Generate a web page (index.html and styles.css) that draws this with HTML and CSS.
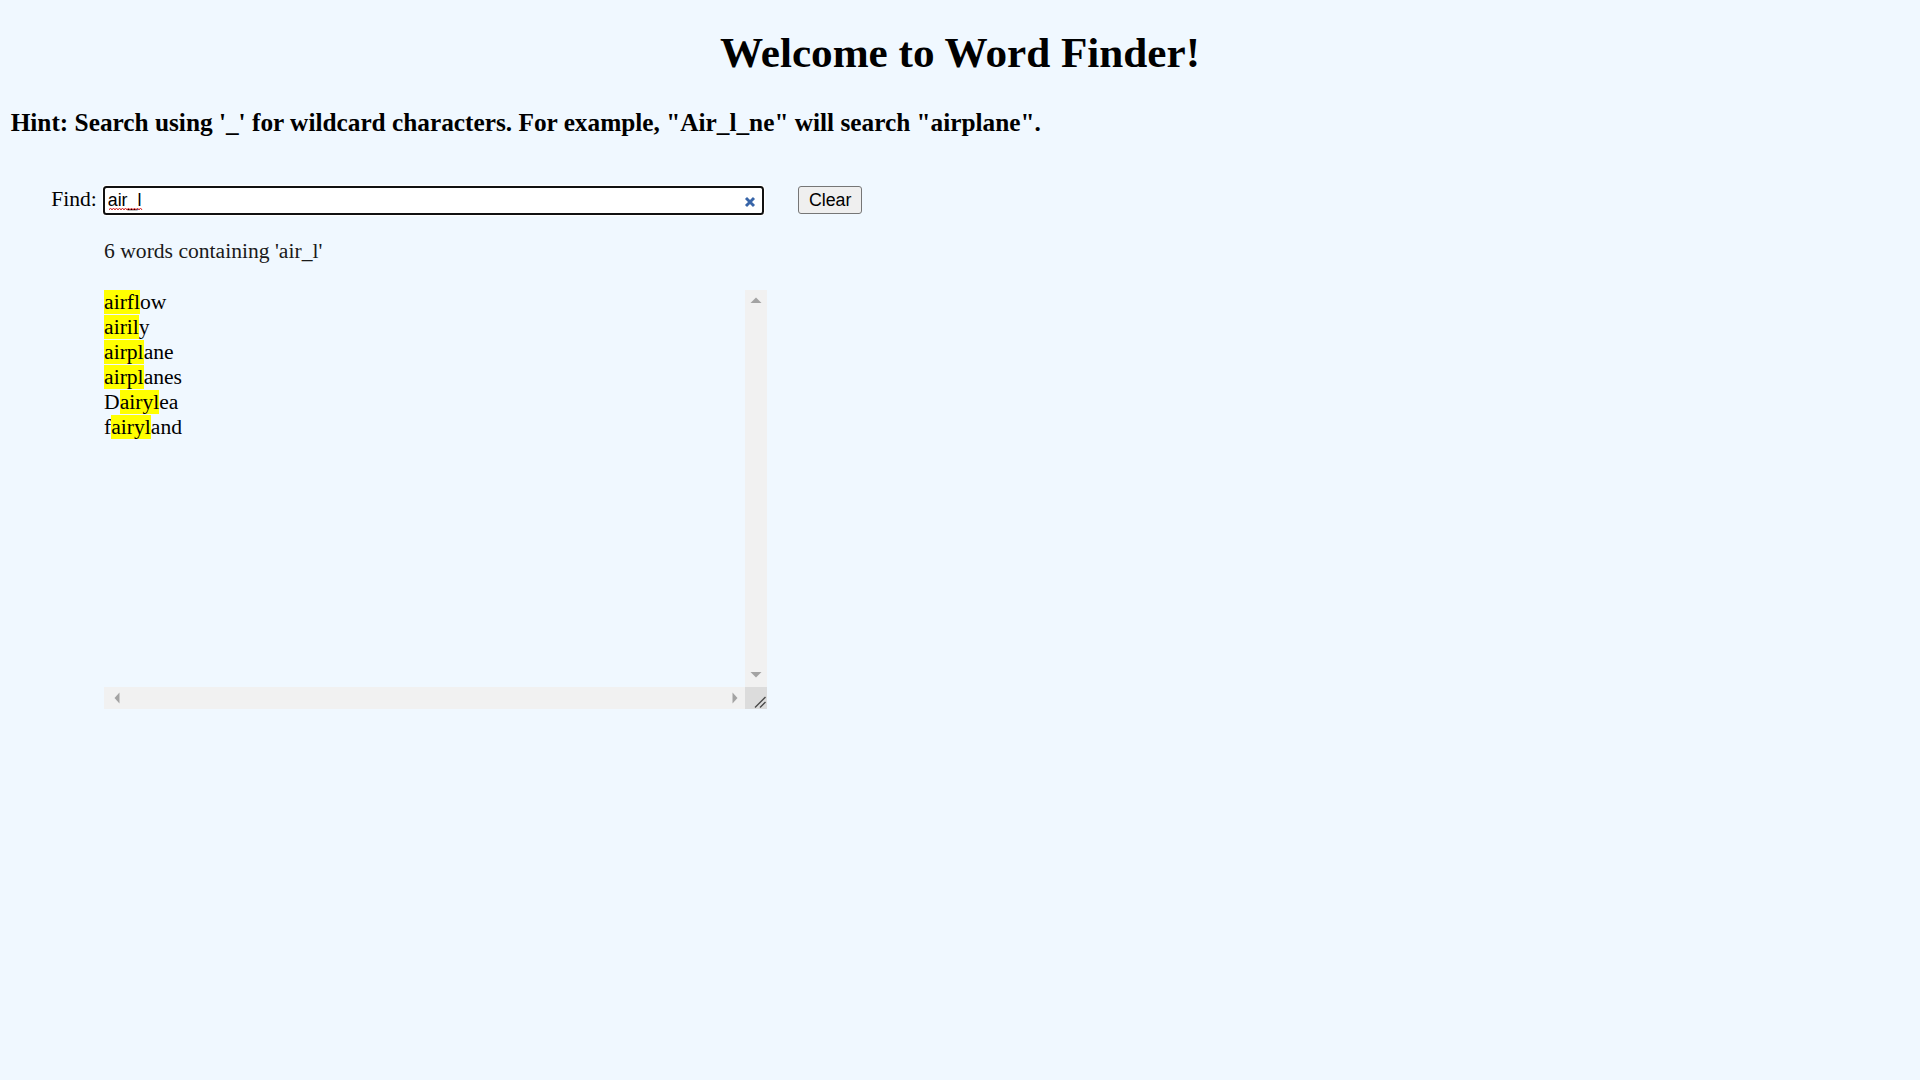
FILE: index.html
```html
<!DOCTYPE html>
<html lang="en">
<head>
<meta charset="utf-8">
<title>Word Finder</title>
<link rel="stylesheet" href="styles.css">
</head>
<body>
<h1 class="title">Welcome to Word Finder!</h1>
<h3 class="hint">Hint: Search using '_' for wildcard characters. For example, "Air_l_ne" will search "airplane".</h3>
<div class="finder">
  <div class="find-row">
    <label class="find-label" for="q">Find:</label>
    <div class="search-wrap">
      <input id="q" class="search" type="text" value="air_l" spellcheck="false">
      <svg class="squiggle" viewBox="0 0 34 4" width="34" height="4" aria-hidden="true"><path d="M0 3 L1.5 1 L3 3 L4.5 1 L6 3 L7.5 1 L9 3 L10.5 1 L12 3 L13.5 1 L15 3 L16.5 1 L18 3 L19.5 1 L21 3 L22.5 1 L24 3 L25.5 1 L27 3 L28.5 1 L30 3 L31.5 1 L33 3" fill="none" stroke="#d42a2a" stroke-width="1"/></svg>
      <svg class="cancel" viewBox="0 0 12 12" width="12" height="12" aria-hidden="true"><path d="M2 2 L10 10 M10 2 L2 10" stroke="#3865a8" stroke-width="2.9" stroke-linecap="butt"/></svg>
    </div>
    <button class="clear-btn" type="button">Clear</button>
  </div>
  <p class="count">6 words containing 'air_l'</p>
  <div class="results">
    <div class="results-list">
      <div class="word"><mark>airfl</mark>ow</div>
      <div class="word"><mark>airil</mark>y</div>
      <div class="word"><mark>airpl</mark>ane</div>
      <div class="word"><mark>airpl</mark>anes</div>
      <div class="word">D<mark>airyl</mark>ea</div>
      <div class="word">f<mark>airyl</mark>and</div>
    </div>
    <div class="vbar">
      <svg viewBox="0 0 22 12" width="22" height="12"><path d="M5.5 9 L11 3.5 L16.5 9 Z" fill="#a3a3a3"/></svg>
      <svg viewBox="0 0 22 12" width="22" height="12"><path d="M5.5 3 L11 8.5 L16.5 3 Z" fill="#a3a3a3"/></svg>
    </div>
    <div class="hbar">
      <svg viewBox="0 0 12 22" width="12" height="22"><path d="M8.5 5.5 L3.5 11 L8.5 16.5 Z" fill="#a3a3a3"/></svg>
      <svg viewBox="0 0 12 22" width="12" height="22"><path d="M3.5 5.5 L8.5 11 L3.5 16.5 Z" fill="#a3a3a3"/></svg>
    </div>
    <div class="corner">
      <svg viewBox="0 0 22 22" width="22" height="22"><path d="M10 20.5 L20.5 10 M15 20.5 L20.5 15" stroke="#4a4a4a" stroke-width="1.4"/></svg>
    </div>
  </div>
</div>
</body>
</html>
```

FILE: styles.css
```css
html, body {
  margin: 0;
  padding: 0;
}

body {
  background: #f0f8ff;
  color: #000;
  font-family: "Liberation Serif", "Times New Roman", serif;
  font-size: 21.6px;
  padding: 0 10.67px;
  min-height: 1080px;
  box-sizing: border-box;
}

.title {
  margin: 0;
  padding-top: 29.4px;
  font-size: 43.2px;
  line-height: 48px;
  font-weight: bold;
  text-align: center;
}

.hint {
  margin: 30.2px 0 0;
  font-size: 25.3px;
  line-height: 29px;
  font-weight: bold;
}

.finder {
  margin-top: 49px;
}

.find-row {
  display: flex;
  align-items: baseline;
}

.find-label {
  margin-left: 40.5px;
  margin-right: 6px;
  line-height: 25px;
}

.search-wrap {
  position: relative;
  display: flex;
}

.search {
  width: 661.6px;
  height: 29px;
  box-sizing: border-box;
  margin: 0;
  padding: 0 20px 0 3px;
  border: 2.6px solid #111;
  border-radius: 3.5px;
  background: #fff;
  box-shadow: 0 0 0 1.2px #fff;
  outline: none;
  font-family: "Liberation Sans", Arial, sans-serif;
  font-size: 17.78px;
  color: #000;
}

.squiggle {
  position: absolute;
  left: 5.8px;
  top: 21.5px;
  width: 34px;
  height: 4px;
}

.cancel {
  position: absolute;
  left: 641.5px;
  top: 10.5px;
  width: 12px;
  height: 12px;
}

.clear-btn {
  margin-left: 34px;
  width: 63.6px;
  height: 28.5px;
  box-sizing: border-box;
  padding: 0;
  border: 1.3px solid #767676;
  border-radius: 3px;
  background: #efefef;
  color: #000;
  font-family: "Liberation Sans", Arial, sans-serif;
  font-size: 17.78px;
}

.count {
  margin: 0;
  padding-top: 24.8px;
  margin-left: 93.4px;
  line-height: 25px;
  color: #1a1a1a;
}

.results {
  margin-top: 25.7px;
  margin-left: 93.4px;
  display: grid;
  grid-template-columns: 641px 22px;
  grid-template-rows: 397px 22px;
  width: 663px;
}

.results-list {
  overflow: hidden;
  line-height: 25px;
}

.word {
  white-space: nowrap;
}

mark {
  background: #ffff00;
  color: #000;
}

.vbar {
  background: #f1f1f1;
  display: flex;
  flex-direction: column;
  justify-content: space-between;
  padding: 3.5px 0 6px;
}

.vbar svg {
  display: block;
}

.hbar {
  background: #f1f1f1;
  display: flex;
  justify-content: space-between;
  padding: 0 4.5px 0 7px;
}

.hbar svg {
  display: block;
}

.corner {
  background: #dcdcdc;
}

.corner svg {
  display: block;
}
```
